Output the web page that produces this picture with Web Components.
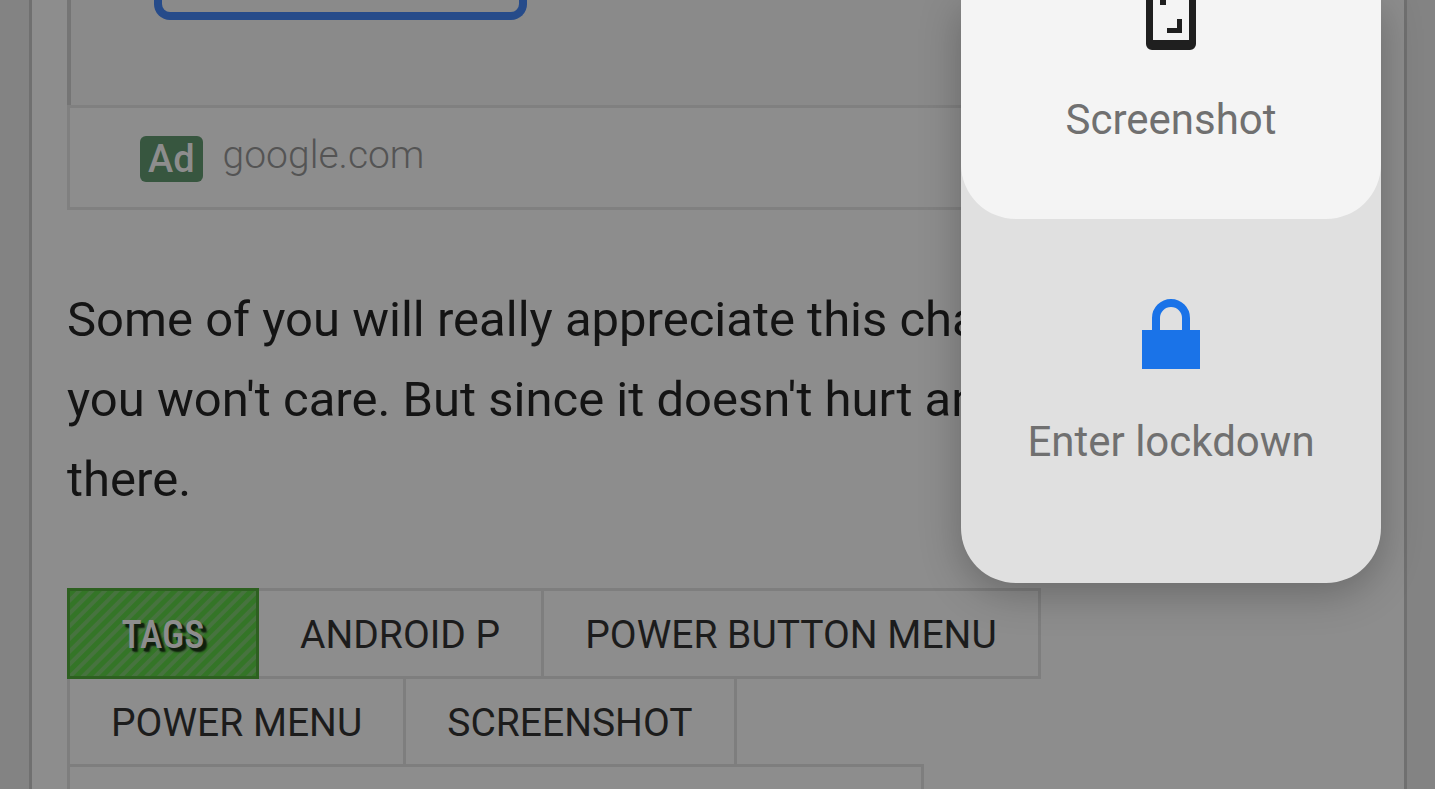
<!DOCTYPE html>
<html lang="en">
<head>
<meta charset="utf-8">
<title>Power menu</title>
<style>
  html, body { height: 100%; margin: 0; }
  body {
    background: #838383;
    font-family: Roboto, "Liberation Sans", sans-serif;
    overflow: hidden;
  }
</style>
</head>
<body>
<article-page>
  <ad-banner slot="ad" label="Ad" site="google.com"></ad-banner>
  <p slot="text">Some of you will really appreciate this cha<br>you won't care. But since it doesn't hurt an<br>there.</p>
  <tag-list slot="tags" tags="ANDROID P,POWER BUTTON MENU,POWER MENU,SCREENSHOT"></tag-list>
</article-page>

<power-menu>
  <power-item slot="main" label="Screenshot">
    <svg width="50" height="50" viewBox="0 0 50 50" aria-hidden="true">
      <path fill="#1f1f1f" fill-rule="evenodd" d="M0 -30H50V44a6 6 0 0 1-6 6H6a6 6 0 0 1-6-6ZM7 -20V40H43V-20Z"/>
      <path fill="#1f1f1f" d="M14 -8H20V5H14ZM31 19H36V33H21V28H31Z"/>
    </svg>
  </power-item>
  <power-item slot="lock" label="Enter lockdown">
    <svg width="58" height="74" viewBox="0 0 58 74" aria-hidden="true">
      <path fill="#1a73e8" d="M0 32H58V71H0Z"/>
      <path fill="none" stroke="#1a73e8" stroke-width="8" d="M14 33V20a15 15 0 0 1 30 0V33" />
    </svg>
  </power-item>
</power-menu>

<script>
// Page column with its side borders
class ArticlePage extends HTMLElement {
  constructor() {
    super();
    this.attachShadow({ mode: "open" });
  }

  connectedCallback() {
    this.shadowRoot.innerHTML = `<style>
      :host {
        display: block;
        box-sizing: border-box;
        height: 100%;
        margin: 0 28px 0 29px;
        padding: 0 36px 0 35px;
        border: solid #707070;
        border-width: 0 3px;
        background: #8d8d8d;
        overflow: hidden;
      }
      ::slotted(p) {
        margin: 70px 0 68px;
        color: #141414;
        font-size: 49px;
        line-height: 80px;
      }
    </style>
    <main>
      <slot name="ad"></slot>
      <slot name="text"></slot>
      <slot name="tags"></slot>
    </main>`;
  }
}
customElements.define("article-page", ArticlePage);

// Lower end of the advert, with the advertiser row
class AdBanner extends HTMLElement {
  constructor() {
    super();
    this.attachShadow({ mode: "open" });
  }

  connectedCallback() {
    const label = this.getAttribute("label");
    const site = this.getAttribute("site");
    this.shadowRoot.innerHTML = `<style>
      :host { display: block; }
      .ad__body {
        box-sizing: border-box;
        height: 105px;
        padding-left: 83px;
        border-left: 4px solid #757575;
        background: #8a8a8a;
      }
      .ad__frame {
        box-sizing: border-box;
        width: 373px;
        height: 20px;
        border: 8px solid #264b8a;
        border-top: 0;
        border-radius: 0 0 16px 16px;
      }
      .ad__row {
        display: flex;
        align-items: center;
        gap: 20px;
        box-sizing: border-box;
        height: 105px;
        padding: 2px 70px 0;
        border: 3px solid #808080;
      }
      .ad__badge {
        padding: 0 8px;
        border-radius: 6px;
        background: #37563f;
        color: #8d8d8d;
        font-size: 38px;
        font-weight: 500;
        line-height: 46px;
      }
      .ad__site {
        padding-bottom: 8px;
        color: #545454;
        font-size: 39px;
        font-weight: 300;
        line-height: 46px;
        text-decoration: none;
      }
    </style>
    <div class="ad__body"><div class="ad__frame"></div></div>
    <div class="ad__row">
      <span class="ad__badge">${label}</span>
      <a class="ad__site" href="#">${site}</a>
    </div>`;
  }
}
customElements.define("ad-banner", AdBanner);

// Wrapping tags that share their borders
class TagList extends HTMLElement {
  constructor() {
    super();
    this.attachShadow({ mode: "open" });
  }

  connectedCallback() {
    const tags = this.getAttribute("tags").split(",");
    this.shadowRoot.innerHTML = `<style>
      :host { display: block; }
      .tags {
        display: flex;
        flex-wrap: wrap;
        padding-left: 3px;
      }
      .tags__title, .tags__item {
        box-sizing: border-box;
        height: 91px;
        margin: 0 0 -3px -3px;
        border: 3px solid #7e7e7e;
        line-height: 88px;
      }
      .tags__title {
        position: relative;
        width: 192px;
        border-color: #2d6020;
        background: repeating-linear-gradient(135deg, #347527 0 4px, #47733f 5px 8px, #347527 9px);
        color: #8d8d8d;
        font-family: "Roboto Condensed", "Liberation Sans Narrow", Roboto, sans-serif;
        font-size: 38px;
        font-weight: 500;
        text-align: center;
        text-shadow: 3px 3px 1px #11200e, 4px 4px 2px #11200e;
      }
      .tags__item {
        padding: 0 41px;
        color: #1c1c1c;
        font-size: 39px;
        text-decoration: none;
      }
      .tags__item--wide { width: 66%; }
    </style>
    <div class="tags">
      <div class="tags__title">TAGS</div>
      ${tags.map((tag) => `<a class="tags__item" href="#">${tag}</a>`).join("")}
      <div class="tags__item tags__item--wide"></div>
    </div>`;
  }
}
customElements.define("tag-list", TagList);

class PowerMenu extends HTMLElement {
  constructor() {
    super();
    this.attachShadow({ mode: "open" });
  }

  connectedCallback() {
    this.shadowRoot.innerHTML = `<style>
      :host {
        position: absolute; /* floats over the page */
        top: 0;
        right: 54px;
        width: 420px;
        border-radius: 0 0 55px 55px;
        background: #e0e0e0;
        box-shadow: 0 10px 40px rgba(0, 0, 0, 0.26);
      }
      .menu__main {
        padding-bottom: 75px;
        border-radius: 0 0 55px 55px;
        background: #f4f4f4;
      }
      .menu__lock { padding: 79px 0 117px; }
    </style>
    <div class="menu__main"><slot name="main"></slot></div>
    <div class="menu__lock"><slot name="lock"></slot></div>`;
  }
}
customElements.define("power-menu", PowerMenu);

class PowerItem extends HTMLElement {
  constructor() {
    super();
    this.attachShadow({ mode: "open" });
  }

  connectedCallback() {
    const label = this.getAttribute("label");
    this.shadowRoot.innerHTML = `<style>
      :host { display: block; }
      button {
        display: flex;
        flex-direction: column;
        align-items: center;
        gap: 46px;
        width: 100%;
        padding: 0;
        border: 0;
        background: none;
        color: #707070;
        font: inherit;
        font-size: 42px;
        line-height: 48px;
        cursor: pointer;
      }
    </style>
    <button type="button"><slot></slot><span>${label}</span></button>`;
  }
}
customElements.define("power-item", PowerItem);
</script>
</body>
</html>
